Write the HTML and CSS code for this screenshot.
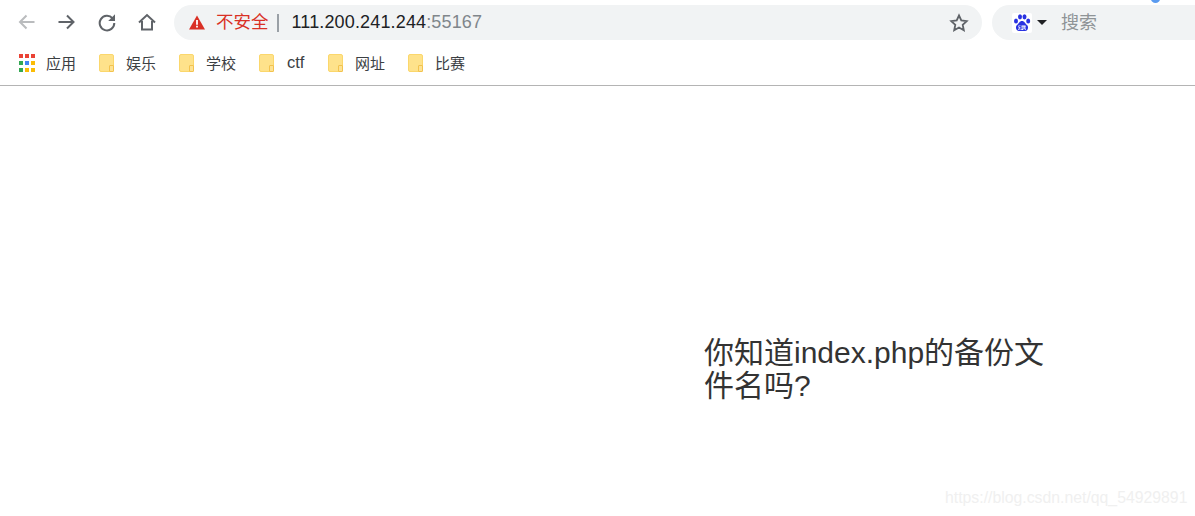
FILE: index.html
```html
<!DOCTYPE html>
<html lang="zh-CN">
  <head>
    <meta charset="UTF-8" />
    <meta name="viewport" content="width=device-width, initial-scale=1.0" />
    <title>111.200.241.244:55167</title>
    <link rel="stylesheet" href="styles.css">
  </head>
  <body>
    <header class="browser">
      <div class="toolbar">
        <div class="nav-buttons">
          <svg class="nav-icon" viewBox="0 0 20 20"><path class="stroke-off" d="M17.500 10H2.500M9.500 3.500L3 10l6.500 6.500"/></svg>
          <svg class="nav-icon" viewBox="0 0 20 20"><path class="stroke-on" d="M1.500 10h15M10 3.500l6.500 6.500-6.500 6.500"/></svg>
          <svg class="nav-icon" viewBox="0 0 20 20"><path class="stroke-on" d="M15.600 6.400A7.300 7.300 0 1 0 17.300 11"/><path class="fill-on" d="M18 2.200v6.800h-6.800z"/></svg>
          <svg class="nav-icon" viewBox="0 0 20 20"><path class="stroke-on" d="M2 10.500L10 3l8 7.500M5 9v8.500h10V9"/></svg>
        </div>
        <div class="omnibox">
          <svg class="warn-icon" viewBox="0 0 16 16"><path d="M8 0.500L16 14.500H0z" fill="#d93025"/><path d="M7.100 5h1.800v4.700H7.100zM7.100 10.800h1.800v1.800H7.100z" fill="#fff"/></svg>
          <span class="warn-text">不安全</span>
          <span class="divider"></span>
          <span class="url">111.200.241.244<span class="port">:55167</span></span>
          <svg class="star-icon" viewBox="0 0 20 20"><path d="M10 2.500l2.300 5 5.400.6-4 3.700 1.100 5.400-4.800-2.700-4.800 2.700 1.100-5.400-4-3.700 5.400-.6z"/></svg>
        </div>
        <div class="searchbox">
          <span class="baidu-tile">
            <svg viewBox="0 0 20 20">
              <ellipse cx="4" cy="8" rx="2" ry="2.500" fill="#2932e1"/>
              <ellipse cx="8" cy="3.800" rx="2" ry="2.600" fill="#2932e1"/>
              <ellipse cx="12.500" cy="3.800" rx="2" ry="2.600" fill="#2932e1"/>
              <ellipse cx="16.200" cy="8" rx="2" ry="2.500" fill="#2932e1"/>
              <path d="M10 8c-2.500 0-3 2.500-5 4-2 1.700-1 6 2 6h6c3 0 4-4.300 2-6-2-1.500-2.500-4-5-4z" fill="#2932e1"/>
              <rect x="6" y="12.500" width="8" height="4.500" rx="1" fill="#fff"/>
              <path d="M9 12v4.600M6.700 14.800a1.200 1.200 0 1 0 2.300 0 1.200 1.200 0 1 0-2.300 0M11 13.500v2a1 1 0 0 0 2.200 0v-2" fill="none" stroke="#2932e1" stroke-width=".9"/>
            </svg>
          </span>
          <span class="caret"></span>
          <span class="search-hint">搜索</span>
        </div>
        <span class="profile-dot"></span>
      </div>
      <nav class="bookmarks">
        <a class="bookmark bookmark-apps">
          <span class="apps-grid">
            <i class="red"></i><i class="red"></i><i class="red"></i>
            <i class="green"></i><i class="blue"></i><i class="amber"></i>
            <i class="green"></i><i class="amber"></i><i class="amber"></i>
          </span>
          <span class="bookmark-label">应用</span>
        </a>
        <a class="bookmark"><span class="folder"></span><span class="bookmark-label">娱乐</span></a>
        <a class="bookmark"><span class="folder"></span><span class="bookmark-label">学校</span></a>
        <a class="bookmark bookmark-short"><span class="folder"></span><span class="bookmark-label">ctf</span></a>
        <a class="bookmark"><span class="folder"></span><span class="bookmark-label">网址</span></a>
        <a class="bookmark"><span class="folder"></span><span class="bookmark-label">比赛</span></a>
      </nav>
    </header>
    <main class="content">
      <p class="question">你知道index.php的备份文件名吗?</p>
    </main>
    <div class="watermark">https://blog.csdn.net/qq_54929891</div>
  </body>
</html>
```

FILE: styles.css
```css
body {
  margin: 0;
  width: 1195px;
  height: 516px;
  overflow: hidden;
  background: #fff;
  font-family: "Liberation Sans", "Noto Sans CJK SC", sans-serif;
}

/* Browser chrome */
.browser {
  height: 85px;
  border-bottom: 1px solid #b4b4b4;
}
.toolbar {
  position: relative;
  height: 35px;
  padding-top: 5px;
  display: flex;
  align-items: center;
}
.nav-buttons {
  width: 174px;
  padding-left: 17px;
  margin-bottom: 2px;
  box-sizing: border-box;
  display: flex;
  gap: 20px;
  flex-shrink: 0;
}
.nav-icon {
  width: 20px;
  height: 20px;
  flex-shrink: 0;
}
.stroke-on {
  fill: none;
  stroke: #5f6368;
  stroke-width: 2;
}
.stroke-off {
  fill: none;
  stroke: #babcbe;
  stroke-width: 2;
}
.fill-on {
  fill: #5f6368;
}

/* Address bar */
.omnibox {
  width: 808px;
  height: 35px;
  padding: 0 13px 0 15px;
  box-sizing: border-box;
  display: flex;
  align-items: center;
  background: #f1f3f4;
  border-radius: 18px;
  flex-shrink: 0;
}
.warn-icon {
  width: 16px;
  height: 16px;
  flex-shrink: 0;
}
.warn-text {
  margin-left: 11px;
  font-size: 17.500px;
  line-height: 20px;
  margin-bottom: 2px;
  color: #d93025;
}
.divider {
  width: 2px;
  height: 18px;
  margin: 0 13px 0 8px;
  background: #9aa0a6;
}
.url {
  flex-grow: 1;
  font-size: 18px;
  letter-spacing: 0.150px;
  color: #202124;
  margin-bottom: 1px;
}
.port {
  color: #80868b;
}
.star-icon {
  width: 20px;
  height: 20px;
  fill: none;
  stroke: #5f6368;
  stroke-width: 1.800;
}

/* Search extension box */
.searchbox {
  width: 203px;
  height: 35px;
  margin-left: 10px;
  padding-left: 20px;
  box-sizing: border-box;
  display: flex;
  align-items: center;
  background: #f1f3f4;
  border-radius: 18px 0 0 18px;
  flex-shrink: 0;
}
.baidu-tile {
  width: 20px;
  height: 20px;
  background: #fff;
  border-radius: 2px;
  flex-shrink: 0;
}
.baidu-tile svg {
  display: block;
  width: 20px;
  height: 20px;
}
.caret {
  margin-left: 5px;
  border-top: 5px solid #202124;
  border-left: 5px solid transparent;
  border-right: 5px solid transparent;
}
.search-hint {
  margin-left: 14px;
  font-size: 18px;
  line-height: 22px;
  color: #8f9497;
}
.profile-dot {
  position: absolute;
  top: -5px;
  left: 1151px;
  width: 9px;
  height: 8px;
  border-radius: 50%;
  background: #5a9bf0;
}

/* Bookmarks */
.bookmarks {
  height: 45px;
  padding-left: 19px;
  box-sizing: border-box;
  display: flex;
  align-items: center;
  gap: 22px;
  font-size: 15px;
  color: #3c4043;
}
.bookmark {
  display: flex;
  align-items: center;
  width: 58px;
  flex-shrink: 0;
}
.bookmark-label {
  margin-bottom: 1px;
}
.bookmark-short {
  width: 47px;
}
.bookmark-short .bookmark-label {
  margin-left: 1px;
  font-size: 16.500px;
}
.apps-grid {
  width: 16px;
  margin-right: 11px;
  display: grid;
  grid-template-columns: repeat(3, 4px);
  gap: 3px 2px;
  flex-shrink: 0;
}
.apps-grid i {
  height: 4px;
}
.red { background: #ea4335; }
.green { background: #34a853; }
.blue { background: #4285f4; }
.amber { background: #fbbc05; }
.folder {
  position: relative;
  width: 15px;
  height: 18px;
  margin-right: 12px;
  box-sizing: border-box;
  background: #fee28b;
  border: 1px solid #fbd76c;
  border-radius: 2px;
  flex-shrink: 0;
}
.folder::after {
  content: "";
  position: absolute;
  right: -1px;
  bottom: -1px;
  width: 3px;
  height: 5px;
  background: #fde293;
  border: 1px solid #f3c34e;
  border-radius: 1px;
}

/* Page */
.content {
  padding: 250px 0 0 704px;
}
.question {
  margin: 0;
  width: 345px;
  font-size: 30px;
  line-height: 33px;
  color: #333;
}
.watermark {
  position: absolute;
  top: 489px;
  left: 945px;
  font-size: 15.800px;
  color: #f0f0f0;
  white-space: nowrap;
}
```
